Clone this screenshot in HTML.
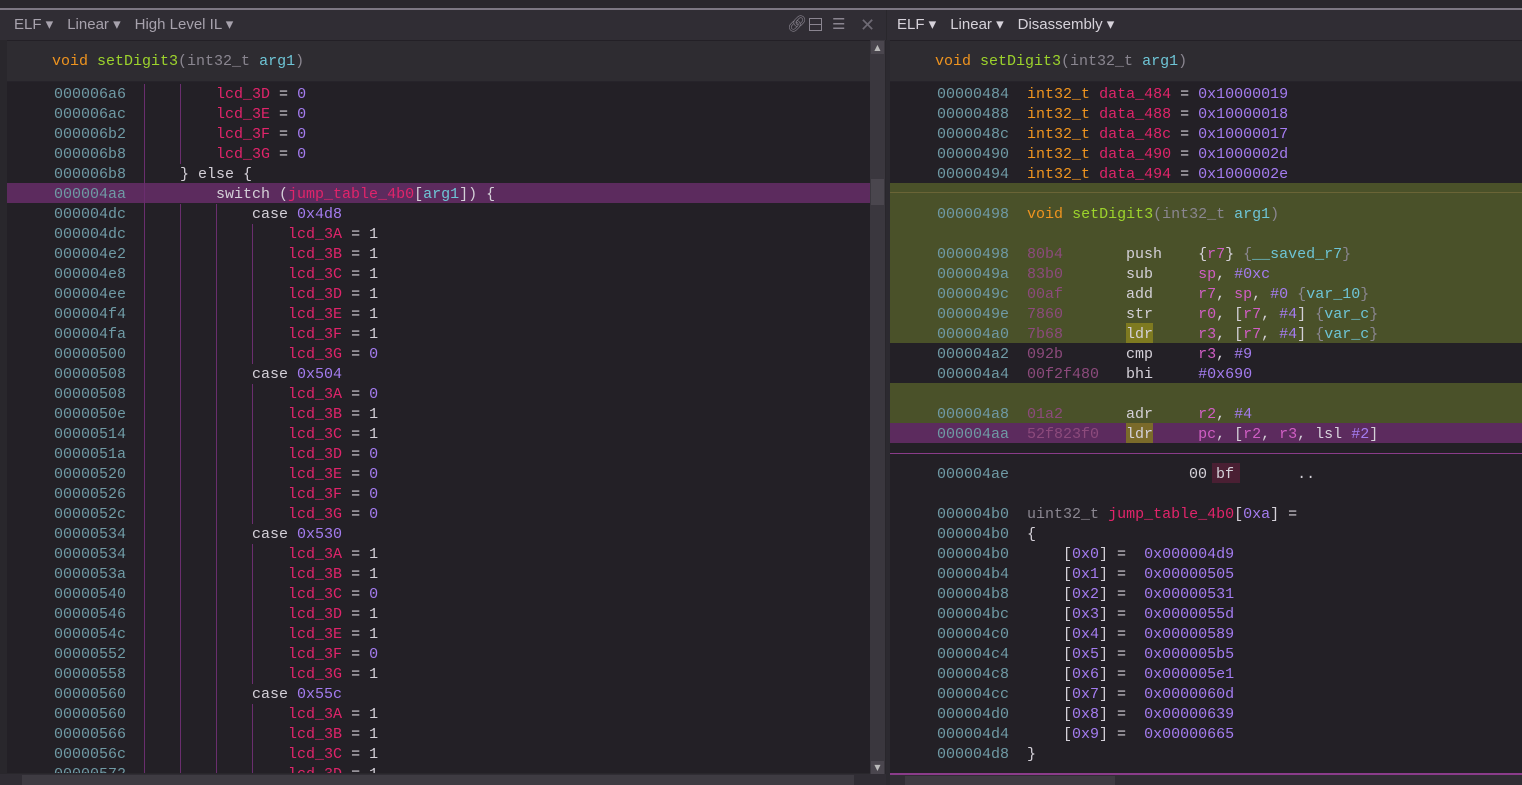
<!DOCTYPE html><html><head><style>
body{margin:0;width:1522px;height:785px;background:#29272c;overflow:hidden;position:relative;font-family:"Liberation Mono",monospace;}
.top{position:absolute;left:0;top:0;width:1522px;height:8px;background:#2a282d;border-bottom:2px solid #7d7883}
.bar{position:absolute;top:10px;height:30px;background:#302d34;font-family:"Liberation Sans",sans-serif;font-size:15px;color:#a7a2ad;line-height:30px}
.bar span{margin-right:14px}
.pane{position:absolute;top:40px;background:#232026;overflow:hidden}
.fh{position:absolute;left:0;top:1px;right:0;height:40px;background:#2e2c31;border-bottom:1px solid #26232a}
pre{margin:0;font-family:"Liberation Mono",monospace;font-size:15px;line-height:20px;position:absolute;white-space:pre;color:#d4d0d8}
.a{color:#6f9aa5}.p{color:#e0246a}.n{color:#a47cf0}.o{color:#ef941f}.g{color:#9dd42c}.c{color:#6ec5d6}.t{color:#8a8690}.b{color:#8c4a7c}.m{color:#d05ec4}.w{color:#d8d4dc}
.vl{position:absolute;width:1px;background:#6a2e6e}
.sb{position:absolute;background:#3a373e}
</style></head><body>
<div class="top"></div>
<div class="bar" style="left:0;width:886px;padding-left:14px;box-sizing:border-box"><span>ELF ▾</span><span>Linear ▾</span><span>High Level IL ▾</span>
<span style="position:absolute;left:787px;top:0;color:#8a8590;font-size:16px">🔗︎</span>
<span style="position:absolute;left:809px;top:8px;width:13px;height:13px;border:1px solid #8a8590;box-sizing:border-box"><span style="position:absolute;left:0;top:5px;width:11px;height:1px;background:#8a8590"></span></span>
<span style="position:absolute;left:832px;top:0;color:#8a8590">☰</span>
<span style="position:absolute;left:860px;top:0;color:#6e6a74;font-size:18px">✕</span></div>
<div class="bar" style="left:887px;width:635px;padding-left:10px;box-sizing:border-box;color:#d6d2da"><span>ELF ▾</span><span>Linear ▾</span><span>Disassembly ▾</span></div>

<div class="pane" style="left:7px;width:863px;height:733px">
<div class="fh"></div>
<pre style="left:45px;top:12px"><span class="o">void</span> <span class="g">setDigit3</span><span class="t">(int32_t</span> <span class="c">arg1</span><span class="t">)</span></pre>
<div style="position:absolute;left:0;top:143px;width:863px;height:20px;background:#5c2b5e"></div>
<div class="vl" style="left:137px;top:44px;height:700px"></div>
<div class="vl" style="left:173px;top:44px;height:80px"></div>
<div class="vl" style="left:173px;top:164px;height:580px"></div>
<div class="vl" style="left:209px;top:164px;height:580px"></div>
<div class="vl" style="left:245px;top:184px;height:140px"></div>
<div class="vl" style="left:245px;top:344px;height:140px"></div>
<div class="vl" style="left:245px;top:504px;height:140px"></div>
<div class="vl" style="left:245px;top:664px;height:80px"></div>
<pre style="left:47px;top:45px"><span class="a">000006a6</span>          <span class="p">lcd_3D</span> = <span class="n">0</span>
<span class="a">000006ac</span>          <span class="p">lcd_3E</span> = <span class="n">0</span>
<span class="a">000006b2</span>          <span class="p">lcd_3F</span> = <span class="n">0</span>
<span class="a">000006b8</span>          <span class="p">lcd_3G</span> = <span class="n">0</span>
<span class="a">000006b8</span>      } else {
<span class="a">000004aa</span>          switch (<span class="p">jump_table_4b0</span>[<span class="c">arg1</span>]) {
<span class="a">000004dc</span>              case <span class="n">0x4d8</span>
<span class="a">000004dc</span>                  <span class="p">lcd_3A</span> = 1
<span class="a">000004e2</span>                  <span class="p">lcd_3B</span> = 1
<span class="a">000004e8</span>                  <span class="p">lcd_3C</span> = 1
<span class="a">000004ee</span>                  <span class="p">lcd_3D</span> = 1
<span class="a">000004f4</span>                  <span class="p">lcd_3E</span> = 1
<span class="a">000004fa</span>                  <span class="p">lcd_3F</span> = 1
<span class="a">00000500</span>                  <span class="p">lcd_3G</span> = <span class="n">0</span>
<span class="a">00000508</span>              case <span class="n">0x504</span>
<span class="a">00000508</span>                  <span class="p">lcd_3A</span> = <span class="n">0</span>
<span class="a">0000050e</span>                  <span class="p">lcd_3B</span> = 1
<span class="a">00000514</span>                  <span class="p">lcd_3C</span> = 1
<span class="a">0000051a</span>                  <span class="p">lcd_3D</span> = <span class="n">0</span>
<span class="a">00000520</span>                  <span class="p">lcd_3E</span> = <span class="n">0</span>
<span class="a">00000526</span>                  <span class="p">lcd_3F</span> = <span class="n">0</span>
<span class="a">0000052c</span>                  <span class="p">lcd_3G</span> = <span class="n">0</span>
<span class="a">00000534</span>              case <span class="n">0x530</span>
<span class="a">00000534</span>                  <span class="p">lcd_3A</span> = 1
<span class="a">0000053a</span>                  <span class="p">lcd_3B</span> = 1
<span class="a">00000540</span>                  <span class="p">lcd_3C</span> = <span class="n">0</span>
<span class="a">00000546</span>                  <span class="p">lcd_3D</span> = 1
<span class="a">0000054c</span>                  <span class="p">lcd_3E</span> = 1
<span class="a">00000552</span>                  <span class="p">lcd_3F</span> = <span class="n">0</span>
<span class="a">00000558</span>                  <span class="p">lcd_3G</span> = 1
<span class="a">00000560</span>              case <span class="n">0x55c</span>
<span class="a">00000560</span>                  <span class="p">lcd_3A</span> = 1
<span class="a">00000566</span>                  <span class="p">lcd_3B</span> = 1
<span class="a">0000056c</span>                  <span class="p">lcd_3C</span> = 1
<span class="a">00000572</span>                  <span class="p">lcd_3D</span> = 1</pre>
</div>
<div class="sb" style="left:870px;top:40px;width:15px;height:735px"></div>
<div style="position:absolute;left:871px;top:41px;width:13px;height:13px;background:#4a464e;color:#bbb;font-size:8px;text-align:center;line-height:13px;font-family:'DejaVu Sans'">▲</div>
<div style="position:absolute;left:871px;top:179px;width:13px;height:26px;background:#4a464e"></div>
<div style="position:absolute;left:871px;top:761px;width:13px;height:13px;background:#4a464e;color:#bbb;font-size:8px;text-align:center;line-height:13px;font-family:'DejaVu Sans'">▼</div>
<div class="sb" style="left:0;top:774px;width:886px;height:11px;background:#302d34"></div>
<div style="position:absolute;left:22px;top:775px;width:832px;height:10px;background:#3e3b42"></div>

<div class="pane" style="left:890px;width:632px;height:735px">
<div class="fh"></div>
<pre style="left:45px;top:12px"><span class="o">void</span> <span class="g">setDigit3</span><span class="t">(int32_t</span> <span class="c">arg1</span><span class="t">)</span></pre>
<div style="position:absolute;left:0;top:143px;width:632px;height:160px;background:#4a5129"></div>
<div style="position:absolute;left:0;top:152px;width:632px;height:1px;background:#6a6436"></div>
<div style="position:absolute;left:0;top:343px;width:632px;height:40px;background:#4a5129"></div>
<div style="position:absolute;left:0;top:383px;width:632px;height:20px;background:#5c2b5e"></div>
<div style="position:absolute;left:0;top:413px;width:632px;height:1px;background:#8a3c8a"></div>
<div style="position:absolute;left:236px;top:283px;width:27px;height:20px;background:#7e7a20"></div>
<div style="position:absolute;left:236px;top:383px;width:27px;height:20px;background:#7a6a2a"></div>
<div style="position:absolute;left:322px;top:423px;width:28px;height:20px;background:#4a1f33"></div>
<pre style="left:47px;top:45px"><span class="a">00000484</span>  <span class="o">int32_t</span> <span class="p">data_484</span> = <span class="n">0x10000019</span>
<span class="a">00000488</span>  <span class="o">int32_t</span> <span class="p">data_488</span> = <span class="n">0x10000018</span>
<span class="a">0000048c</span>  <span class="o">int32_t</span> <span class="p">data_48c</span> = <span class="n">0x10000017</span>
<span class="a">00000490</span>  <span class="o">int32_t</span> <span class="p">data_490</span> = <span class="n">0x1000002d</span>
<span class="a">00000494</span>  <span class="o">int32_t</span> <span class="p">data_494</span> = <span class="n">0x1000002e</span>

<span class="a">00000498</span>  <span class="o">void</span> <span class="g">setDigit3</span><span class="t">(int32_t</span> <span class="c">arg1</span><span class="t">)</span>

<span class="a">00000498</span>  <span class="b">80b4</span>       push    {<span class="m">r7</span>} <span class="t">{</span><span class="c">__saved_r7</span><span class="t">}</span>
<span class="a">0000049a</span>  <span class="b">83b0</span>       sub     <span class="m">sp</span>, <span class="n">#0xc</span>
<span class="a">0000049c</span>  <span class="b">00af</span>       add     <span class="m">r7</span>, <span class="m">sp</span>, <span class="n">#0</span> <span class="t">{</span><span class="c">var_10</span><span class="t">}</span>
<span class="a">0000049e</span>  <span class="b">7860</span>       str     <span class="m">r0</span>, [<span class="m">r7</span>, <span class="n">#4</span>] <span class="t">{</span><span class="c">var_c</span><span class="t">}</span>
<span class="a">000004a0</span>  <span class="b">7b68</span>       ldr     <span class="m">r3</span>, [<span class="m">r7</span>, <span class="n">#4</span>] <span class="t">{</span><span class="c">var_c</span><span class="t">}</span>
<span class="a">000004a2</span>  <span class="b">092b</span>       cmp     <span class="m">r3</span>, <span class="n">#9</span>
<span class="a">000004a4</span>  <span class="b">00f2f480</span>   bhi     <span class="n">#0x690</span>

<span class="a">000004a8</span>  <span class="b">01a2</span>       adr     <span class="m">r2</span>, <span class="n">#4</span>
<span class="a">000004aa</span>  <span class="b">52f823f0</span>   ldr     <span class="m">pc</span>, [<span class="m">r2</span>, <span class="m">r3</span>, <span class="w">lsl</span> <span class="n">#2</span>]

<span class="a">000004ae</span>                    00 bf       ..

<span class="a">000004b0</span>  <span class="t">uint32_t</span> <span class="p">jump_table_4b0</span>[<span class="n">0xa</span>] =
<span class="a">000004b0</span>  {
<span class="a">000004b0</span>      [<span class="n">0x0</span>] =  <span class="n">0x000004d9</span>
<span class="a">000004b4</span>      [<span class="n">0x1</span>] =  <span class="n">0x00000505</span>
<span class="a">000004b8</span>      [<span class="n">0x2</span>] =  <span class="n">0x00000531</span>
<span class="a">000004bc</span>      [<span class="n">0x3</span>] =  <span class="n">0x0000055d</span>
<span class="a">000004c0</span>      [<span class="n">0x4</span>] =  <span class="n">0x00000589</span>
<span class="a">000004c4</span>      [<span class="n">0x5</span>] =  <span class="n">0x000005b5</span>
<span class="a">000004c8</span>      [<span class="n">0x6</span>] =  <span class="n">0x000005e1</span>
<span class="a">000004cc</span>      [<span class="n">0x7</span>] =  <span class="n">0x0000060d</span>
<span class="a">000004d0</span>      [<span class="n">0x8</span>] =  <span class="n">0x00000639</span>
<span class="a">000004d4</span>      [<span class="n">0x9</span>] =  <span class="n">0x00000665</span>
<span class="a">000004d8</span>  }</pre>
<div style="position:absolute;left:0;top:733px;width:632px;height:2px;background:#8a3c8a"></div>
</div>
<div class="sb" style="left:886px;top:40px;width:4px;height:745px;background:#2c2a30"></div>
<div class="sb" style="left:890px;top:775px;width:632px;height:10px;background:#302d34"></div>
<div style="position:absolute;left:905px;top:776px;width:210px;height:9px;background:#3e3b42"></div>
</body></html>
